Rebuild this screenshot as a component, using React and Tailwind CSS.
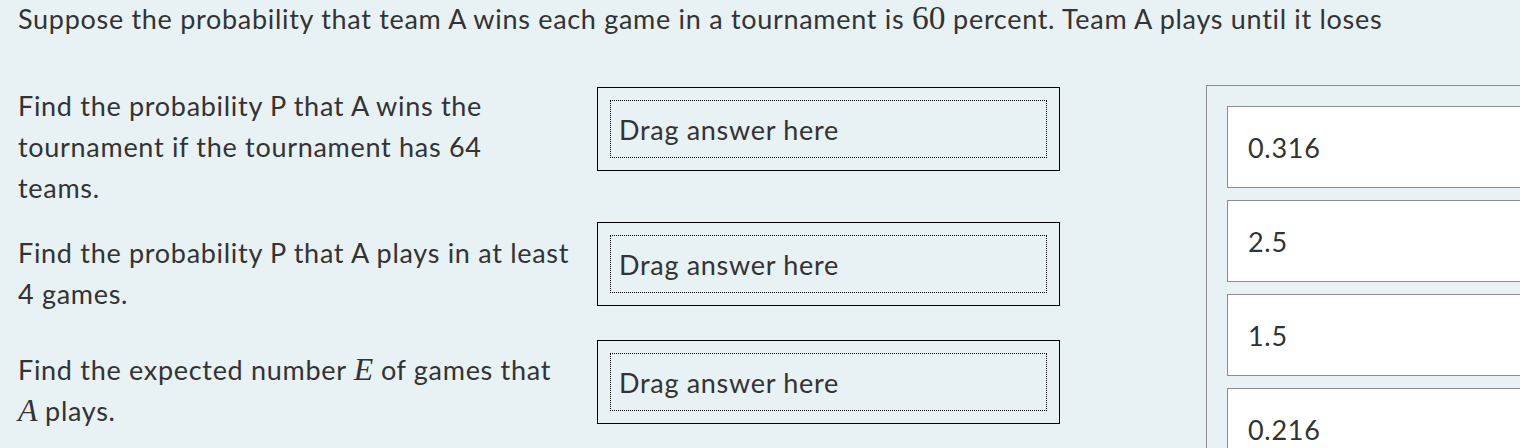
import React from "react";

const rows = [
  {
    lines: ["Find the probability P that A wins the", "tournament if the tournament has 64", "teams."],
    rowClass: "mt-[2px]",
    labelClass: "-mt-[2px]",
  },
  {
    lines: ["Find the probability P that A plays in at least", "4 games."],
    rowClass: "mt-[14px]",
    labelClass: "mt-[10px]",
  },
  {
    lines: [
      <>
        Find the expected number <M>E</M> of games that
      </>,
      <>
        <M>A</M> plays.
      </>,
    ],
    rowClass: "mt-[26px]",
    labelClass: "mt-[9px]",
  },
];

const answers = ["0.316", "2.5", "1.5", "0.216"];

function M({ children }) {
  return (
    <span className="font-['Liberation_Serif',serif] italic text-[1.18em] leading-none tracking-normal">
      {children}
    </span>
  );
}

function DropZone() {
  return (
    <div className="w-[463px] h-[84px] shrink-0 border border-black p-[12px]">
      <div className="h-[58px] border border-dotted border-black pl-[8px] pt-[8px] whitespace-nowrap">
        Drag answer here
      </div>
    </div>
  );
}

export default function App() {
  return (
    <div className="w-[1520px] h-[448px] overflow-hidden bg-[#e8f1f4] text-[#333] font-['Lato',sans-serif] text-[27px] leading-[41px] tracking-[0.7px]">
      {/* QUESTION */}
      <p className="-mt-[2px] pl-[18px] whitespace-nowrap">
        Suppose the probability that team A wins each game in a tournament is{" "}
        <span className="font-['Liberation_Serif',serif] text-[1.24em] leading-none tracking-normal">60</span>{" "}
        percent. Team A plays until it loses
      </p>

      <div className="flex mt-[46px]">
        {/* PROMPTS + DROP ZONES */}
        <div className="flex flex-col w-[1206px] shrink-0">
          {rows.map((row, i) => (
            <div key={i} className={`flex items-start ${row.rowClass}`}>
              <div className={`w-[597px] shrink-0 pl-[18px] ${row.labelClass}`}>
                {row.lines.map((line, j) => (
                  <div key={j} className="whitespace-nowrap">
                    {line}
                  </div>
                ))}
              </div>
              <DropZone />
            </div>
          ))}
        </div>

        {/* ANSWER BANK */}
        <div className="w-[400px] shrink-0 h-[420px] border border-[#8c8c8c] p-[20px] pr-0 flex flex-col gap-[12px]">
          {answers.map((a) => (
            <div
              key={a}
              className="h-[82px] shrink-0 bg-white border border-[#8c8c8c] pl-[20px] pt-[20px]"
            >
              {a}
            </div>
          ))}
        </div>
      </div>
    </div>
  );
}
